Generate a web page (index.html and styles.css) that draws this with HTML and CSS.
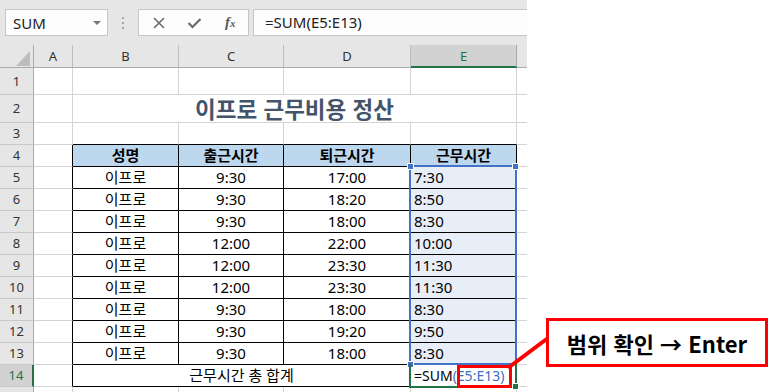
FILE: index.html
```html
<!DOCTYPE html>
<html lang="ko">

<head>
    <meta charset="UTF-8">
    <meta name="viewport" content="width=device-width, initial-scale=1.0">
    <title>근무비용 정산</title>
    <link rel="stylesheet" href="styles.css">
</head>

<body>
    <div class="app">
        <div class="excel">
            <div class="toolbar">
                <div class="namebox">
                    <span>SUM</span>
                    <span class="drop"></span>
                </div>
                <div class="dots"><i></i><i></i><i></i></div>
                <div class="fxbox">
                    <span class="btn">
                        <svg width="12" height="12" viewBox="0 0 12 12"><path d="M1 1L11 11M11 1L1 11" stroke="#6b6b6b" stroke-width="1.6" fill="none"/></svg>
                    </span>
                    <span class="btn">
                        <svg width="15" height="12" viewBox="0 0 15 12"><path d="M1.5 6L5.5 10L13.5 2" stroke="#6b6b6b" stroke-width="2.2" fill="none"/></svg>
                    </span>
                    <span class="btn fx">f<small>x</small></span>
                </div>
                <div class="input">=SUM(E5:E13)</div>
            </div>

            <table class="sheet">
                <colgroup>
                    <col style="width: 34px">
                    <col style="width: 39px">
                    <col style="width: 106px">
                    <col style="width: 105px">
                    <col style="width: 127px">
                    <col style="width: 106px">
                    <col style="width: 20px">
                </colgroup>
                <tr class="hdr">
                    <th class="corner">
                        <svg width="14" height="15" viewBox="0 0 14 15"><polygon points="14,0 14,15 0,15" fill="#bdbdbd"/></svg>
                    </th>
                    <th>A</th>
                    <th>B</th>
                    <th>C</th>
                    <th>D</th>
                    <th class="on">E</th>
                    <th></th>
                </tr>
                <tr class="h27">
                    <td class="rh">1</td><td></td><td></td><td></td><td></td><td></td><td></td>
                </tr>
                <tr class="h28">
                    <td class="rh">2</td><td></td>
                    <td colspan="4" class="title">이프로 근무비용 정산</td>
                    <td></td>
                </tr>
                <tr>
                    <td class="rh">3</td><td></td>
                    <td class="kb"></td><td class="kb"></td><td class="kb"></td><td class="kb"></td><td></td>
                </tr>
                <tr>
                    <td class="rh">4</td><td class="kr"></td>
                    <td class="k head">성명</td>
                    <td class="k head">출근시간</td>
                    <td class="k head">퇴근시간</td>
                    <td class="k head">근무시간</td>
                    <td></td>
                </tr>
                <tr>
                    <td class="rh">5</td><td class="kr"></td>
                    <td class="k c">이프로</td><td class="k c">9:30</td><td class="k c">17:00</td><td class="k sel">7:30</td><td></td>
                </tr>
                <tr>
                    <td class="rh">6</td><td class="kr"></td>
                    <td class="k c">이프로</td><td class="k c">9:30</td><td class="k c">18:20</td><td class="k sel">8:50</td><td></td>
                </tr>
                <tr>
                    <td class="rh">7</td><td class="kr"></td>
                    <td class="k c">이프로</td><td class="k c">9:30</td><td class="k c">18:00</td><td class="k sel">8:30</td><td></td>
                </tr>
                <tr>
                    <td class="rh">8</td><td class="kr"></td>
                    <td class="k c">이프로</td><td class="k c">12:00</td><td class="k c">22:00</td><td class="k sel">10:00</td><td></td>
                </tr>
                <tr>
                    <td class="rh">9</td><td class="kr"></td>
                    <td class="k c">이프로</td><td class="k c">12:00</td><td class="k c">23:30</td><td class="k sel">11:30</td><td></td>
                </tr>
                <tr>
                    <td class="rh">10</td><td class="kr"></td>
                    <td class="k c">이프로</td><td class="k c">12:00</td><td class="k c">23:30</td><td class="k sel">11:30</td><td></td>
                </tr>
                <tr>
                    <td class="rh">11</td><td class="kr"></td>
                    <td class="k c">이프로</td><td class="k c">9:30</td><td class="k c">18:00</td><td class="k sel">8:30</td><td></td>
                </tr>
                <tr>
                    <td class="rh">12</td><td class="kr"></td>
                    <td class="k c">이프로</td><td class="k c">9:30</td><td class="k c">19:20</td><td class="k sel">9:50</td><td></td>
                </tr>
                <tr>
                    <td class="rh">13</td><td class="kr"></td>
                    <td class="k c">이프로</td><td class="k c">9:30</td><td class="k c">18:00</td><td class="k sel">8:30</td><td></td>
                </tr>
                <tr>
                    <td class="rh on">14</td><td class="kr"></td>
                    <td colspan="3" class="k c">근무시간 총 합계</td>
                    <td class="k edit">=SUM<span class="ref">(E5:E13)</span></td>
                    <td></td>
                </tr>
                <tr>
                    <td class="rh"></td><td></td><td></td><td></td><td></td><td></td><td></td>
                </tr>
            </table>
        </div>

        <!-- selection marks over the sheet -->
        <div class="range"></div>
        <span class="handle blue h1"></span>
        <span class="handle blue h2"></span>
        <span class="handle blue h3"></span>
        <div class="active"></div>
        <span class="handle green h4"></span>

        <div class="mark"></div>
        <svg class="pointer" width="770" height="392">
            <line x1="508" y1="368" x2="548" y2="338" stroke="#ff0000" stroke-width="4"/>
        </svg>
        <div class="callout">범위 확인 → Enter</div>
    </div>
</body>

</html>
```

FILE: styles.css
```css
body {
    margin: 0;
    background-color: #fff;
}

.app {
    position: relative;
    width: 770px;
    height: 392px;
    overflow: hidden;
}

.excel {
    width: 527px;
    height: 392px;
    overflow: hidden;
    background-color: #e6e6e6;
    font-family: "Noto Sans", "Noto Sans CJK KR", sans-serif;
}

/* formula bar */
.toolbar {
    display: flex;
    align-items: flex-start;
    height: 45px;
    padding: 9px 0 0 5px;
    box-sizing: border-box;
}

.namebox {
    display: flex;
    align-items: center;
    justify-content: space-between;
    width: 103px;
    height: 27px;
    box-sizing: border-box;
    padding: 0 6px 0 7px;
    border: 1px solid #c6c6c6;
    background-color: #fdfdfd;
    color: #222;
    font-size: 15px;
}

.drop {
    width: 0;
    height: 0;
    border-left: 4px solid transparent;
    border-right: 4px solid transparent;
    border-top: 4px solid #777;
}

.dots {
    display: flex;
    flex-direction: column;
    align-items: center;
    gap: 3px;
    width: 30px;
    padding-top: 8px;
}

.dots i {
    width: 2px;
    height: 2px;
    background-color: #a8a8a8;
}

.fxbox {
    display: flex;
    align-items: center;
    width: 111px;
    height: 27px;
    box-sizing: border-box;
    padding-left: 2px;
    border: 1px solid #c6c6c6;
    background-color: #fdfdfd;
}

.btn {
    display: flex;
    align-items: center;
    justify-content: center;
    width: 36px;
}

.fx {
    font-family: "Liberation Serif", serif;
    font-style: italic;
    font-weight: bold;
    font-size: 15px;
    color: #5a5a5a;
}

.fx small {
    font-size: 11px;
}

.input {
    flex: 1;
    height: 27px;
    box-sizing: border-box;
    margin-left: 4px;
    padding-left: 11px;
    border: 1px solid #c6c6c6;
    border-right: none;
    background-color: #fdfdfd;
    color: #222;
    font-size: 15px;
    line-height: 25px;
}

/* sheet grid */
.sheet {
    table-layout: fixed;
    width: 537px;
    border-collapse: separate;
    border-spacing: 0;
    background-color: #fff;
    font-size: 15px;
    color: #000;
}

.sheet tr {
    height: 22px;
}

.sheet tr.hdr {
    height: 23px;
}

.sheet tr.h27 {
    height: 27px;
}

.sheet tr.h28 {
    height: 28px;
}

.sheet td {
    padding: 0;
    border-right: 1px solid #d4d4d4;
    border-bottom: 1px solid #d4d4d4;
    white-space: nowrap;
    overflow: hidden;
    line-height: 19px;
}

.sheet th {
    padding: 0;
    background-color: #e6e6e6;
    border-right: 1px solid #bdbdbd;
    border-bottom: 1px solid #ababab;
    font-weight: normal;
    font-size: 13px;
    color: #333;
}

.sheet th.corner {
    text-align: right;
    vertical-align: bottom;
    padding: 0 3px 1px 0;
    border-right-color: #ababab;
    line-height: 0;
}

.sheet th.on {
    background-color: #d2d2d2;
    color: #217346;
    border-bottom: 2px solid #217346;
    border-right-color: #ababab;
}

.sheet td.rh {
    background-color: #e6e6e6;
    border-right-color: #ababab;
    border-bottom-color: #c8c8c8;
    text-align: center;
    font-size: 13px;
    color: #333;
}

.sheet td.rh.on {
    background-color: #d2d2d2;
    color: #217346;
    border-right: 2px solid #217346;
}

.sheet td.k {
    border-right-color: #000;
    border-bottom-color: #000;
}

.sheet td.kr {
    border-right-color: #000;
}

.sheet td.kb {
    border-bottom-color: #000;
}

.sheet td.title {
    text-align: center;
    font-size: 22.5px;
    line-height: 27px;
    font-weight: bold;
    color: #44546a;
    font-family: "Noto Sans CJK KR", sans-serif;
    overflow: visible;
}

.head {
    background-color: #bdd7ee;
    text-align: center;
    font-weight: bold;
}

.c {
    text-align: center;
}

.sel {
    background-color: #e8eef8;
    padding-left: 3px !important;
}

.sheet td.edit {
    padding-left: 3px;
    font-size: 14px;
    overflow: visible;
}

.ref {
    color: #3b6fc4;
}

/* overlays */
.range {
    position: absolute;
    left: 409px;
    top: 165px;
    width: 108px;
    height: 200px;
    box-sizing: border-box;
    border: 2px solid #4472c4;
}

.active {
    position: absolute;
    left: 409px;
    top: 364px;
    width: 108px;
    height: 24px;
    box-sizing: border-box;
    border: 2px solid #217346;
    border-top: none;
}

.handle {
    position: absolute;
    width: 5px;
    height: 5px;
    border: 1px solid #fff;
}

.blue {
    background-color: #4472c4;
}

.green {
    background-color: #217346;
}

.h1 {
    left: 407px;
    top: 163px;
}

.h2 {
    left: 512px;
    top: 163px;
}

.h3 {
    left: 407px;
    top: 361px;
}

.h4 {
    left: 512px;
    top: 383px;
}

.mark {
    position: absolute;
    left: 457px;
    top: 365px;
    width: 55px;
    height: 23px;
    box-sizing: border-box;
    border: 3px solid #ff0000;
}

.pointer {
    position: absolute;
    left: 0;
    top: 0;
}

.callout {
    position: absolute;
    left: 546px;
    top: 318px;
    width: 222px;
    height: 49px;
    box-sizing: border-box;
    border: 3px solid #ff0000;
    background-color: #fff;
    display: flex;
    align-items: center;
    justify-content: center;
    font-family: "Noto Sans CJK KR", sans-serif;
    font-weight: bold;
    font-size: 22px;
    color: #000;
}
```
